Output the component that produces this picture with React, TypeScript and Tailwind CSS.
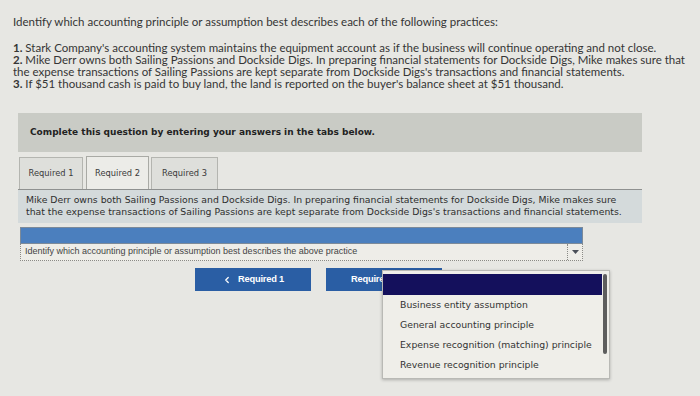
import { ChevronLeft } from "lucide-react";

const options = [
    "Business entity assumption",
    "General accounting principle",
    "Expense recognition (matching) principle",
    "Revenue recognition principle",
];

export default function App() {
    return (
        <div className="relative w-[700px] h-[396px] overflow-hidden bg-[#e7e7e3] text-[#353535]">
            {/* question text */}
            <div className="pl-[13px] pt-[16px] font-['Lato',sans-serif] text-[11.5px] leading-[12px] whitespace-nowrap">
                <p>Identify which accounting principle or assumption best describes each of the following practices:</p>
                <div className="mt-[14px]">
                    <p><b>1.</b> Stark Company's accounting system maintains the equipment account as if the business will continue operating and not close.</p>
                    <p><b>2.</b> Mike Derr owns both Sailing Passions and Dockside Digs. In preparing financial statements for Dockside Digs, Mike makes sure that</p>
                    <p>the expense transactions of Sailing Passions are kept separate from Dockside Digs's transactions and financial statements.</p>
                    <p><b>3.</b> If $51 thousand cash is paid to buy land, the land is reported on the buyer's balance sheet at $51 thousand.</p>
                </div>
            </div>

            {/* instructions bar */}
            <div className="ml-[18px] mt-[23px] w-[624px] h-[39px] bg-[#c9cbc5] flex items-center pl-[12px] font-['DejaVu_Sans',sans-serif] text-[9px] font-bold text-[#222]">
                Complete this question by entering your answers in the tabs below.
            </div>

            {/* tabs */}
            <div className="ml-[19px] mt-[4px] flex items-end h-[33px] font-['DejaVu_Sans',sans-serif] text-[8.3px] text-[#3a3a3a]">
                <div className="w-[64px] h-[32px] flex items-center justify-center bg-[#dedfdb] border border-[#b4b5b0] border-b-0">Required 1</div>
                <div className="ml-[3px] w-[63px] h-[33px] flex items-center justify-center bg-[#ecece8] border border-[#a9aaa5] border-b-0">Required 2</div>
                <div className="ml-[2px] w-[67px] h-[32px] flex items-center justify-center bg-[#dedfdb] border border-[#b4b5b0] border-b-0">Required 3</div>
            </div>

            {/* tab content */}
            <div className="ml-[18px] w-[624px] h-[34px] bg-[#d4dadb] border-t border-[#8f9190] pl-[8px] pt-[4px] font-['DejaVu_Sans',sans-serif] text-[9.3px] leading-[12px] text-[#2e2e2e] whitespace-nowrap">
                <p>Mike Derr owns both Sailing Passions and Dockside Digs. In preparing financial statements for Dockside Digs, Mike makes sure</p>
                <p>that the expense transactions of Sailing Passions are kept separate from Dockside Digs's transactions and financial statements.</p>
            </div>

            {/* select */}
            <div className="ml-[20px] mt-[4px] w-[563px]">
                <div className="h-[17px] bg-[#4b7fbe] border border-[#7c8a99]" />
                <div className="h-[17px] flex bg-[#eeede8] border border-dotted border-[#8a8a86] border-t-0">
                    <div className="flex-1 pl-[4px] flex items-center font-['Liberation_Sans',sans-serif] text-[9px] text-[#444] whitespace-nowrap overflow-hidden">
                        Identify which accounting principle or assumption best describes the above practice
                    </div>
                    <div className="w-[15px] border-l border-dotted border-[#8a8a86] flex items-center justify-center">
                        <svg width="7" height="4" viewBox="0 0 7 4"><path d="M0 0h7L3.5 4z" fill="#4a4f58" /></svg>
                    </div>
                </div>
            </div>

            {/* nav buttons */}
            <div className="ml-[195px] mt-[7px] flex gap-[15px] font-['Liberation_Sans',sans-serif] text-[9.3px] font-bold text-white">
                <div className="w-[116px] h-[23px] bg-[#2a5ea4] flex items-center justify-center gap-[6px] tracking-[-0.2px]">
                    <ChevronLeft size={10} strokeWidth={3} />
                    <span>Required 1</span>
                </div>
                <div className="w-[116px] h-[23px] bg-[#2a5ea4] flex items-center pl-[25px] tracking-[-0.2px]">
                    Required 2
                </div>
            </div>

            {/* open dropdown list */}
            <div className="absolute left-[382px] top-[270px] w-[228px] h-[109px] bg-[#efeee9] border border-[#b9b9b5] shadow-[0_1px_3px_rgba(0,0,0,0.25)] pt-[3px] flex">
                <div className="flex-1">
                    <div className="h-[21px] bg-[#14105c]" />
                    <ul className="pl-[17px] font-['DejaVu_Sans',sans-serif] text-[9.3px] text-[#333]">
                        {options.map((o) => (
                            <li key={o} className="h-[20px] leading-[20px]">{o}</li>
                        ))}
                    </ul>
                </div>
                <div className="w-[6px] mr-[1px]">
                    <div className="w-[4px] h-[80px] mx-auto bg-[#5d5d5d] rounded-[2px]" />
                </div>
            </div>
        </div>
    );
}
